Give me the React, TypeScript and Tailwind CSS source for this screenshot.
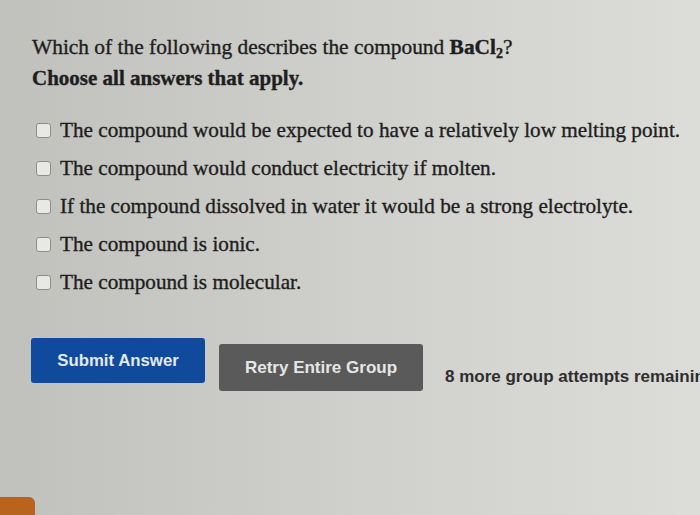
import React, { useState } from 'react';

const options = [
  'The compound would be expected to have a relatively low melting point.',
  'The compound would conduct electricity if molten.',
  'If the compound dissolved in water it would be a strong electrolyte.',
  'The compound is ionic.',
  'The compound is molecular.',
];

export default function App() {
  const [checked, setChecked] = useState<boolean[]>(options.map(() => false));

  const toggle = (i: number) => setChecked(c => c.map((v, j) => (j === i ? !v : v)));

  return (
    <div className="relative w-[700px] h-[515px] overflow-hidden bg-linear-to-r from-[#c0c0bc] via-[#cfcfcb] to-[#dcdcd8] text-[#1e1e1e]">
      <div className="pl-[32px] pt-[32px] font-['Liberation_Serif',serif] [-webkit-text-stroke:0.35px_#1e1e1e]">
        <p className="text-[21.4px] leading-[30px]">
          Which of the following describes the compound <b>BaCl<sub className="text-[14px]">2</sub></b>?
        </p>
        <p className="text-[21px] leading-[32px] font-bold">Choose all answers that apply.</p>

        <div className="mt-[22px] flex flex-col gap-[10px]">
          {options.map((o, i) => (
            <label key={o} className="flex items-center gap-[9px] pl-[4px] cursor-pointer">
              <input type="checkbox" checked={checked[i]} onChange={() => toggle(i)} className="sr-only" />
              <span className="w-[15px] h-[15px] rounded-[3px] border border-[#8d8d8a] bg-[#e8e8e4] shrink-0 [-webkit-text-stroke:0]" />
              <span className="text-[21.2px] leading-[28px]">{o}</span>
            </label>
          ))}
        </div>
      </div>

      <div className="mt-[42px] pl-[31px] flex items-start gap-[14px] font-['Liberation_Sans',sans-serif] font-bold">
        <button className="shrink-0 w-[174px] h-[45px] rounded-[3px] bg-[#0f4a9c] text-[#e4e8f0] text-[16.8px]">Submit Answer</button>
        <button className="shrink-0 mt-[6px] w-[204px] h-[47px] rounded-[3px] bg-[#5a5a5a] text-[#e6e6e6] text-[17px]">Retry Entire Group</button>
        <span className="shrink-0 ml-[8px] mt-[29px] text-[17px] leading-[20px] text-[#2e2e2e] whitespace-nowrap">8 more group attempts remaining</span>
      </div>

      <div className="absolute left-0 bottom-0 w-[35px] h-[18px] rounded-tr-[6px] bg-[#b8641e]" />
    </div>
  );
}
